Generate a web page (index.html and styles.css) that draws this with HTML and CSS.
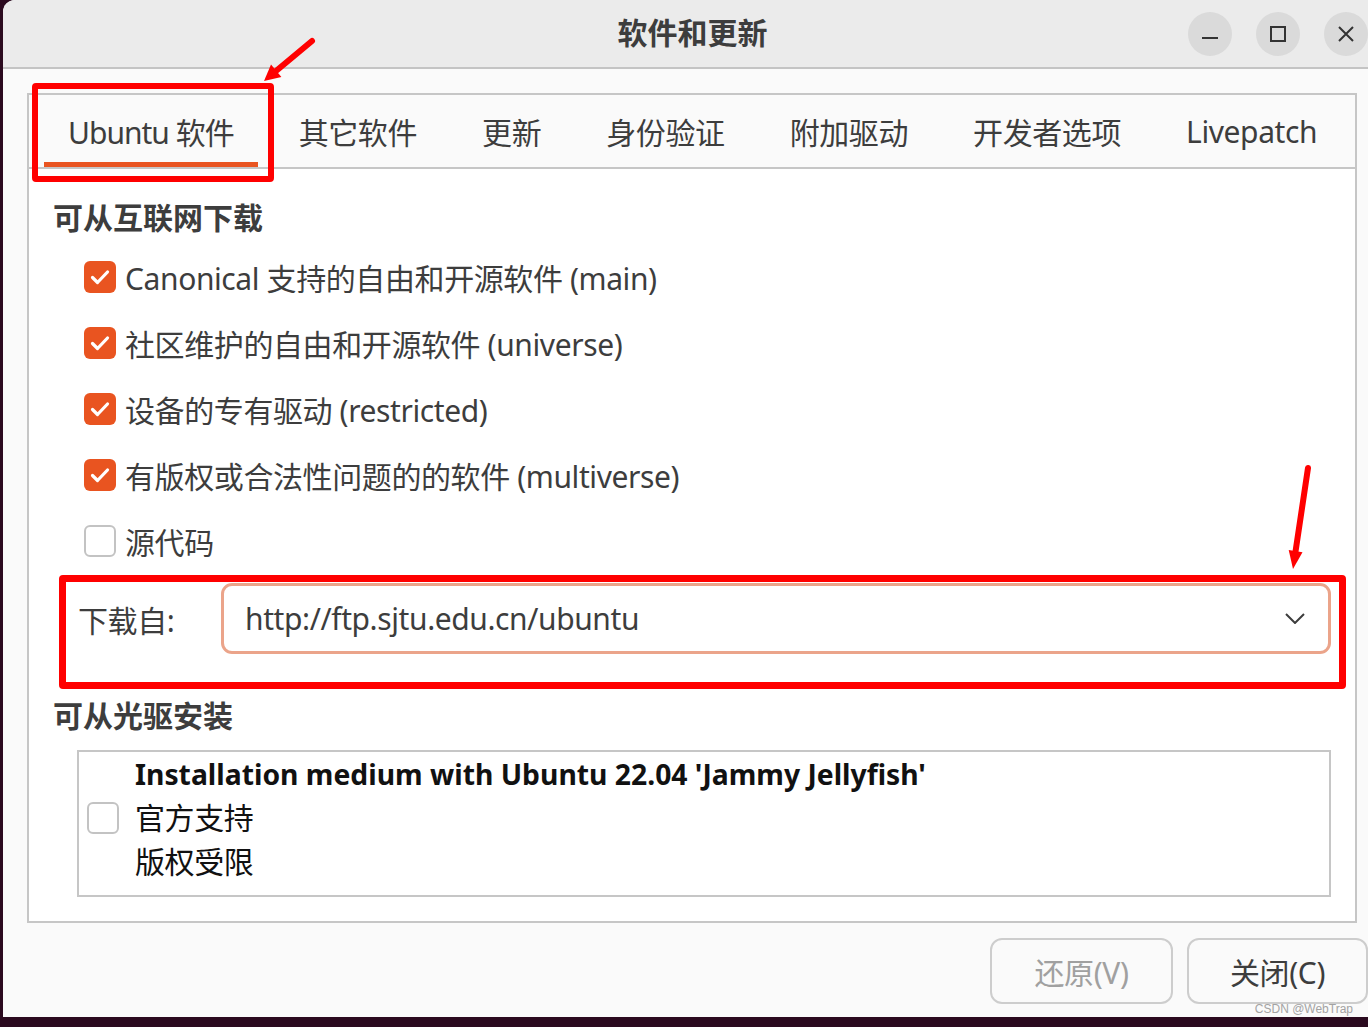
FILE: index.html
```html
<!DOCTYPE html>
<html lang="zh-CN">
<head>
    <meta charset="UTF-8">
    <title>软件和更新</title>
    <link rel="stylesheet" href="styles.css">
</head>
<body>
    <div class="window">
        <header class="headerbar">
            <div></div>
            <h1 class="title">软件和更新</h1>
            <div class="controls">
                <span class="wbtn"><svg width="16" height="16" viewBox="0 0 16 16"><path d="M0 12h16" stroke="#333" stroke-width="2"/></svg></span>
                <span class="wbtn"><svg width="16" height="16" viewBox="0 0 16 16"><rect x="1" y="1" width="14" height="14" fill="none" stroke="#333" stroke-width="2"/></svg></span>
                <span class="wbtn"><svg width="16" height="16" viewBox="0 0 16 16"><path d="M1 1L15 15M15 1L1 15" stroke="#333" stroke-width="2"/></svg></span>
            </div>
        </header>

        <main class="content">
            <div class="notebook">
                <nav class="tabs">
                    <div class="tab active">Ubuntu 软件</div>
                    <div class="tab">其它软件</div>
                    <div class="tab">更新</div>
                    <div class="tab">身份验证</div>
                    <div class="tab">附加驱动</div>
                    <div class="tab">开发者选项</div>
                    <div class="tab">Livepatch</div>
                </nav>

                <section class="page">
                    <h2 class="section-title">可从互联网下载</h2>
                    <ul class="options">
                        <li class="option"><span class="check on"><svg width="32" height="32" viewBox="0 0 32 32"><path d="M8.5 16.5l5 5L23.5 11" fill="none" stroke="#fff" stroke-width="3.2" stroke-linecap="round" stroke-linejoin="round"/></svg></span>Canonical 支持的自由和开源软件 (main)</li>
                        <li class="option"><span class="check on"><svg width="32" height="32" viewBox="0 0 32 32"><path d="M8.5 16.5l5 5L23.5 11" fill="none" stroke="#fff" stroke-width="3.2" stroke-linecap="round" stroke-linejoin="round"/></svg></span>社区维护的自由和开源软件 (universe)</li>
                        <li class="option"><span class="check on"><svg width="32" height="32" viewBox="0 0 32 32"><path d="M8.5 16.5l5 5L23.5 11" fill="none" stroke="#fff" stroke-width="3.2" stroke-linecap="round" stroke-linejoin="round"/></svg></span>设备的专有驱动 (restricted)</li>
                        <li class="option"><span class="check on"><svg width="32" height="32" viewBox="0 0 32 32"><path d="M8.5 16.5l5 5L23.5 11" fill="none" stroke="#fff" stroke-width="3.2" stroke-linecap="round" stroke-linejoin="round"/></svg></span>有版权或合法性问题的的软件 (multiverse)</li>
                        <li class="option"><span class="check"></span>源代码</li>
                    </ul>

                    <div class="source-row">
                        <span class="source-label">下载自:</span>
                        <div class="combo">
                            <span>http://ftp.sjtu.edu.cn/ubuntu</span>
                            <svg width="20" height="11" viewBox="0 0 20 11"><path d="M1 1l9 9 9-9" fill="none" stroke="#3d3d3d" stroke-width="2"/></svg>
                        </div>
                    </div>

                    <h2 class="section-title cd-title">可从光驱安装</h2>
                    <div class="cd-list">
                        <div class="cd-item">
                            <span class="check"></span>
                            <div class="cd-text">
                                <b>Installation medium with Ubuntu 22.04 'Jammy Jellyfish'</b>
                                <span>官方支持</span>
                                <span>版权受限</span>
                            </div>
                        </div>
                    </div>
                </section>
            </div>

            <footer class="actions">
                <button class="btn" disabled>还原(V)</button>
                <button class="btn">关闭(C)</button>
            </footer>
        </main>
    </div>

    <div class="watermark">CSDN @WebTrap</div>

    <!-- annotations drawn over the screenshot -->
    <div class="redbox tab-mark"></div>
    <div class="redbox source-mark"></div>
    <svg class="arrows" width="1368" height="1027" viewBox="0 0 1368 1027">
        <path d="M312 41L276 71" stroke="#ff0000" stroke-width="6" stroke-linecap="round"/>
        <polygon points="264,81 271,64.6 281.4,77" fill="#ff0000"/>
        <path d="M1308 468L1295.6 551" stroke="#ff0000" stroke-width="6" stroke-linecap="round"/>
        <polygon points="1293,569 1288.7,550 1302.5,552.2" fill="#ff0000"/>
    </svg>
</body>
</html>
```

FILE: styles.css
```css
body {
    margin: 0;
    height: 1027px;
    overflow: hidden;
    background-color: #2b0a1f;
    font-family: "Noto Sans", "Noto Sans CJK SC", sans-serif;
    color: #3d3d3d;
    letter-spacing: -0.4px;
}
.window {
    margin-left: 3px;
    width: 1379px;
    height: 1017px;
    background-color: #fafafa;
    border-top-left-radius: 12px;
    display: flex;
    flex-direction: column;
    overflow: hidden;
}
.headerbar {
    height: 67px;
    flex: none;
    background-color: #ebebeb;
    border-bottom: 2px solid #c4c4c4;
    display: grid;
    grid-template-columns: 1fr auto 1fr;
    align-items: center;
}
.title {
    margin: 0 0 6px 0;
    font-size: 30px;
    letter-spacing: 0;
    font-weight: bold;
    color: #3d3d3d;
}
.controls {
    display: flex;
    justify-content: flex-end;
    gap: 24px;
    padding-right: 14px;
}
.wbtn {
    width: 44px;
    height: 44px;
    border-radius: 50%;
    background-color: #dadada;
    display: flex;
    align-items: center;
    justify-content: center;
}
.content {
    flex: 1;
    display: flex;
    flex-direction: column;
}
.notebook {
    margin: 24px 25px 0 24px;
    border: 2px solid #c6c6c6;
}
.tabs {
    display: flex;
    gap: 17px;
    height: 72px;
    padding-left: 15px;
    border-bottom: 2px solid #c6c6c6;
    background-color: #fafafa;
}
.tab {
    flex: none;
    white-space: nowrap;
    padding: 0 24px;
    display: flex;
    align-items: center;
    font-size: 30px;
    color: #3d3d3d;
}
.tab.active {
    letter-spacing: -1px;
    box-shadow: inset 0 -5px 0 #e95420;
}
.page {
    background-color: #fff;
    padding: 29px 24px 24px 24px;
}
.section-title {
    margin: 0;
    height: 40px;
    line-height: 40px;
    font-size: 30px;
    letter-spacing: 0;
    font-weight: bold;
    color: #3d3d3d;
}
.options {
    list-style: none;
    margin: 6px 0 0 0;
    padding: 0 0 0 31px;
}
.option {
    height: 66px;
    display: flex;
    align-items: center;
    gap: 9px;
    font-size: 30px;
    white-space: nowrap;
}
.check {
    width: 32px;
    height: 32px;
    flex: none;
    box-sizing: border-box;
    border: 2px solid #c3c3c3;
    border-radius: 6px;
    background-color: #fff;
    display: flex;
    align-items: center;
    justify-content: center;
}
.check.on {
    border: none;
    background-color: #e95420;
}
.source-row {
    margin-top: 9px;
    padding-left: 25px;
    display: flex;
    align-items: center;
    font-size: 30px;
}
.source-label {
    width: 143px;
    flex: none;
}
.combo {
    flex: 1;
    height: 71px;
    box-sizing: border-box;
    border: 3px solid #eba48a;
    border-radius: 11px;
    padding: 0 23px 0 21px;
    display: flex;
    align-items: center;
    justify-content: space-between;
}
.cd-title {
    margin-top: 42px;
}
.cd-list {
    margin: 14px 0 0 24px;
    height: 147px;
    box-sizing: border-box;
    border: 2px solid #c6c6c6;
}
.cd-item {
    display: flex;
    align-items: center;
    gap: 16px;
    padding-left: 8px;
}
.cd-text {
    display: flex;
    flex-direction: column;
    font-size: 30px;
    line-height: 44px;
    color: #111;
}
.cd-text b {
    font-size: 28.3px;
    letter-spacing: 0;
}
.actions {
    display: flex;
    justify-content: flex-end;
    gap: 14px;
    padding: 15px 14px 0 0;
}
.btn {
    width: 183px;
    height: 66px;
    border: 2px solid #cdcdcd;
    border-radius: 12px;
    background-color: #fafafa;
    font-family: inherit;
    font-size: 30px;
    letter-spacing: -0.4px;
    color: #3d3d3d;
}
.btn:disabled {
    color: #a0a0a0;
}
.btn + .btn {
    width: 181px;
}
.watermark {
    position: absolute;
    top: 1002px;
    right: 15px;
    font-family: "Liberation Sans", sans-serif;
    font-size: 12px;
    letter-spacing: 0;
    color: #a3a3a3;
}
.redbox {
    position: absolute;
    border: 6px solid #ff0000;
    border-radius: 4px;
}
.tab-mark {
    left: 32px;
    top: 83px;
    width: 230px;
    height: 87px;
}
.source-mark {
    left: 59px;
    top: 575px;
    width: 1273px;
    height: 100px;
    border-width: 7px;
}
.arrows {
    position: absolute;
    left: 0;
    top: 0;
}
```
